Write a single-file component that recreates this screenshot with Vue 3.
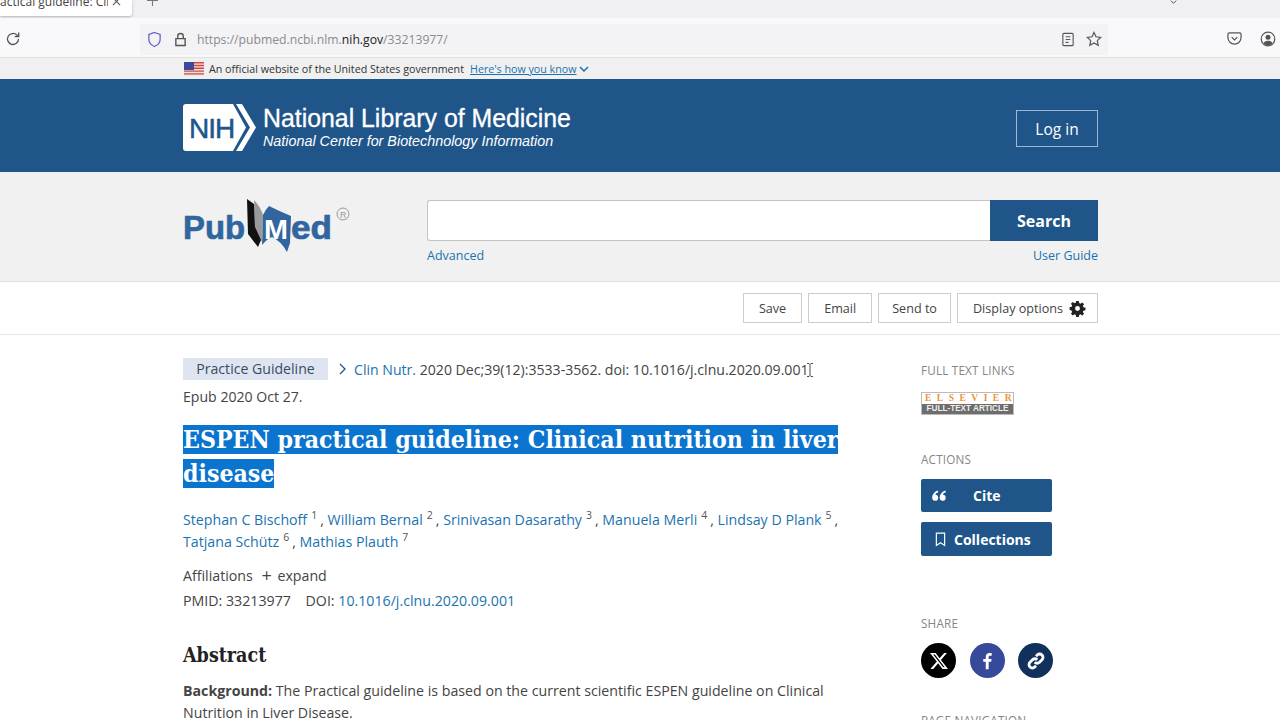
<script setup>
const authors = [
  { name: "Stephan C Bischoff", n: 1 },
  { name: "William Bernal", n: 2 },
  { name: "Srinivasan Dasarathy", n: 3 },
  { name: "Manuela Merli", n: 4 },
  { name: "Lindsay D Plank", n: 5 },
  { name: "Tatjana Schütz", n: 6 },
  { name: "Mathias Plauth", n: 7 },
];
</script>

<template>
  <div class="page">
    <div class="tabstrip">
      <div class="tab">
        <span class="tab-title">actical guideline: Clini</span>
        <svg class="tab-x" viewBox="0 0 10 10"><path d="M1 1l8 8M9 1l-8 8" /></svg>
      </div>
      <svg class="tab-plus" viewBox="0 0 12 12"><path d="M6 0v12M0 6h12" /></svg>
      <svg class="tab-down" viewBox="0 0 10 6"><path d="M1 1l4 4 4-4" /></svg>
    </div>

    <div class="toolbar">
      <svg class="reload" viewBox="0 0 16 16"><path d="M13.5 8a5.5 5.5 0 1 1-1.7-4L13.5 5.6M13.7 1.6v4h-4" /></svg>
      <div class="urlbar">
        <svg class="shield" viewBox="0 0 16 18"><path d="M8 1.5l6 2v5.5c0 3.6-2.6 6-6 7.5-3.4-1.500-6-3.900-6-7.500V3.500z" /></svg>
        <svg class="lock" viewBox="0 0 14 16"><path d="M4 7V4.500a3 3 0 0 1 6 0V7M2 7h10v7.500H2z" /></svg>
        <span class="url">https://pubmed.ncbi.nlm.<b>nih.gov</b>/33213977/</span>
        <svg class="reader" viewBox="0 0 14 16"><path d="M2.500 1.500h9a1 1 0 0 1 1 1v11a1 1 0 0 1-1 1h-9a1 1 0 0 1-1-1v-11a1 1 0 0 1 1-1zM4.500 5h5M4.500 8h5M4.500 11h3" /></svg>
        <svg class="star" viewBox="0 0 16 16"><path d="M8 1.500l2 4.300 4.700.6-3.400 3.200.9 4.700L8 12l-4.200 2.300.9-4.700L1.300 6.400 6 5.800z" /></svg>
      </div>
      <svg class="pocket" viewBox="0 0 16 16"><path d="M2.500 2h11A1.500 1.500 0 0 1 15 3.500V7A7 7 0 0 1 1 7V3.500A1.500 1.500 0 0 1 2.500 2zM5 6.500l3 3 3-3" /></svg>
      <svg class="account" viewBox="0 0 16 16">
        <circle class="ring" cx="8" cy="8" r="6.800" />
        <circle cx="8" cy="6.300" r="2.500" />
        <path d="M3.500 12.500c.6-2 2.400-2.800 4.500-2.800s3.900.8 4.500 2.800a6.500 6.500 0 0 1-9 0z" />
      </svg>
    </div>

    <div class="gov">
      <div class="wrap gov-in">
        <svg class="flag" viewBox="0 0 20 14">
          <rect width="20" height="14" fill="#e8e4e4" />
          <path d="M0 .7h20M0 3.500h20M0 6.300h20M0 9.100h20M0 11.900h20" stroke="#d2483f" stroke-width="1.400" />
          <rect width="10" height="8" fill="#3d4a9c" />
        </svg>
        <span>An official website of the United States government</span>
        <span class="know">Here's how you know</span>
        <svg class="know-ch" viewBox="0 0 10 6"><path d="M1 1l4 4 4-4" /></svg>
      </div>
    </div>

    <header class="nih">
      <div class="wrap nih-in">
        <div class="nih-brand">
          <svg class="nih-logo" viewBox="0 0 73 47">
            <path fill="#fff" d="M3 0h47l13 23.500L50 47H3a3 3 0 0 1-3-3V3a3 3 0 0 1 3-3z" />
            <path fill="#fff" d="M53 0h6l14 23.500L59 47h-6l14-23.500z" />
            <text x="6" y="34" class="nih-text">NIH</text>
          </svg>
          <div>
            <div class="nlm">National Library of Medicine</div>
            <div class="ncbi">National Center for Biotechnology Information</div>
          </div>
        </div>
        <a class="login">Log in</a>
      </div>
    </header>

    <section class="search">
      <div class="wrap search-in">
        <svg class="pm-logo" viewBox="0 0 170 58">
          <path fill="#31659f" d="M80 18Q83 12 86 9Q96 14 108 19L107 46L104 55Q98 44 89 40Q84 42 79 48z" />
          <path fill="#9a9a9a" d="M71 3Q77 9 80 18L80 37L79 45L72 32z" />
          <path fill="#111" d="M64 2L71 7L72 30L78 43L75 50L65 37z" />
          <text x="0" y="42" class="pm-text" textLength="62" lengthAdjust="spacingAndGlyphs">Pub</text>
          <text x="81" y="42" class="pm-m" textLength="24" lengthAdjust="spacingAndGlyphs">M</text>
          <text x="108" y="42" class="pm-text" textLength="41" lengthAdjust="spacingAndGlyphs">ed</text>
          <circle cx="160" cy="17" r="6" fill="none" stroke="#999" />
          <text x="157" y="20.500" class="pm-r">R</text>
        </svg>
        <div class="search-box">
          <div class="search-row">
            <div class="search-input"></div>
            <div class="search-btn">Search</div>
          </div>
          <div class="search-links">
            <a>Advanced</a>
            <a>User Guide</a>
          </div>
        </div>
      </div>
    </section>

    <div class="actions-bar">
      <div class="wrap actions-in">
        <button>Save</button>
        <button>Email</button>
        <button class="send">Send to</button>
        <button class="display">
          Display options
          <svg class="gear" viewBox="0 0 16 16">
            <path fill-rule="evenodd" d="M6.600 0h2.800l.4 2.200 1.300.6 1.900-1.300 2 2-1.300 1.900.6 1.300 2.200.4v2.800l-2.200.4-.6 1.300 1.300 1.900-2 2-1.900-1.300-1.300.6-.4 2.200H6.600l-.4-2.200-1.300-.6-1.900 1.300-2-2 1.300-1.900-.6-1.300L-.5 9.400V6.600l2.200-.4.6-1.300-1.300-1.900 2-2 1.900 1.300 1.300-.6zM8 5.400a2.600 2.600 0 1 0 0 5.200 2.600 2.600 0 0 0 0-5.200z" />
          </svg>
        </button>
      </div>
    </div>

    <div class="wrap content">
      <main class="article">
        <div class="cit">
          <span class="badge">Practice Guideline</span>
          <svg class="cit-ch" viewBox="0 0 7 12"><path d="M1 1l5 5-5 5" /></svg>
          <a>Clin Nutr.</a> 2020 Dec;39(12):3533-3562. doi: 10.1016/j.clnu.2020.09.001<svg class="ibeam" viewBox="0 0 6 14"><path d="M0 .5h2l1 1 1-1h2M3 1.500v11M0 13.500h2l1-1 1 1h2" /></svg>
          <br />Epub 2020 Oct 27.
        </div>
        <h1><span>ESPEN practical guideline: Clinical nutrition in liver disease</span></h1>
        <div class="authors">
          <template v-for="(a, i) in authors" :key="a.n">
            <a>{{ a.name }}</a><sup>{{ a.n }}</sup><template v-if="i < authors.length - 1">, </template>
          </template>
        </div>
        <div class="affil">Affiliations <span class="plus">+</span> expand</div>
        <div class="ids">PMID: 33213977 <span class="doi">DOI:</span> <a>10.1016/j.clnu.2020.09.001</a></div>
        <h2>Abstract</h2>
        <p class="abstract"><b>Background:</b> The Practical guideline is based on the current scientific ESPEN guideline on Clinical Nutrition in Liver Disease.</p>
      </main>

      <aside class="side">
        <div class="side-title">FULL TEXT LINKS</div>
        <div class="elsevier">
          <div class="el-top">ELSEVIER</div>
          <div class="el-bot">FULL-TEXT ARTICLE</div>
        </div>
        <div class="side-title actions-title">ACTIONS</div>
        <div class="side-btn cite">
          <svg class="quote" viewBox="0 0 14 11"><path d="M5.800.5C2.800 1.600.2 4.200.2 7.800a3 3 0 1 0 3.300-3c.1-1 1-1.900 2.900-2.500zM13.300.5c-3 1.100-5.600 3.700-5.600 7.300a3 3 0 1 0 3.300-3c.1-1 1-1.900 2.900-2.500z" /></svg>
          <span>Cite</span>
        </div>
        <div class="side-btn coll">
          <svg class="bookmark" viewBox="0 0 12 16"><path d="M1.500 1h9v13.500L6 11.500l-4.500 3z" /></svg>
          <span>Collections</span>
        </div>
        <div class="side-title share-title">SHARE</div>
        <div class="share">
          <span class="circle c-x">
            <svg viewBox="0 0 24 24"><path fill="#fff" fill-rule="evenodd" d="M18.200 2.500h3.300l-7.200 8.200L22.800 21.500h-6.600l-5.200-6.800-5.900 6.800H1.700l7.700-8.800L1.200 2.500H8l4.700 6.200zm-1.200 17h1.800L7 4.300H5z" /></svg>
          </span>
          <span class="circle c-f">
            <svg viewBox="0 0 24 24"><path fill="#fff" d="M14 22v-9h3l.5-3.500H14V7.300c0-1 .3-1.700 1.800-1.700h1.800V2.400c-.3 0-1.400-.1-2.600-.1-2.700 0-4.500 1.600-4.500 4.600v2.600H7.500V13h3v9z" /></svg>
          </span>
          <span class="circle c-l">
            <svg viewBox="0 0 24 24"><g fill="none" stroke="#fff" stroke-width="3.400"><path d="M10.500 13.500a4 4 0 0 0 5.700 0l3-3a4 4 0 0 0-5.700-5.700l-1.500 1.500" /><path d="M13.500 10.500a4 4 0 0 0-5.700 0l-3 3a4 4 0 0 0 5.700 5.700l1.500-1.500" /></g></svg>
          </span>
        </div>
        <div class="side-title nav-title">PAGE NAVIGATION</div>
      </aside>
    </div>
  </div>
</template>

<style scoped>
.page {
  height: 720px;
  overflow: hidden;
  background: #fff;
  font-family: "Open Sans", "Noto Sans", sans-serif;
  color: #212121;
  position: relative;
}
.wrap {
  width: 915px;
  margin: 0 0 0 183px;
}
a {
  color: #1a73b0;
}

.tabstrip {
  height: 18px;
  background: #f0f0f4;
  position: relative;
  display: flex;
}
.tab {
  width: 132px;
  height: 16px;
  background: #fff;
  box-shadow: 0 1px 3px rgba(0, 0, 0, 0.25);
  border-radius: 0 0 3px 0;
  position: relative;
  overflow: hidden;
}
.tab-title {
  position: absolute;
  left: 0;
  top: -6px;
  width: 108px;
  overflow: hidden;
  white-space: nowrap;
  font-size: 12px;
  line-height: 16px;
  color: #444;
}
.tab-x {
  position: absolute;
  left: 112px;
  top: -3px;
  width: 9px;
  height: 9px;
  fill: none;
  stroke: #555;
  stroke-width: 1.200;
}
.tab-plus {
  position: absolute;
  left: 147px;
  top: -5px;
  width: 11px;
  height: 11px;
  fill: none;
  stroke: #777;
  stroke-width: 1.200;
}
.tab-down {
  position: absolute;
  left: 1170px;
  top: 0;
  width: 7px;
  height: 4px;
  fill: none;
  stroke: #555;
  stroke-width: 1.500;
}

.toolbar {
  height: 39px;
  background: #f9f9fb;
  border-bottom: 1px solid #e2e2e4;
  display: flex;
  align-items: center;
  position: relative;
}
.reload {
  width: 16px;
  height: 16px;
  margin: 2px 0 0 5px;
  fill: none;
  stroke: #555;
  stroke-width: 1.300;
}
.urlbar {
  width: 968px;
  height: 31px;
  margin: 3px 0 0 119px;
  background: #f3f3f5;
  display: flex;
  align-items: center;
}
.shield {
  width: 15px;
  height: 17px;
  margin-left: 7px;
  fill: none;
  stroke: #5a5fc8;
  stroke-width: 1.300;
}
.lock {
  width: 13px;
  height: 15px;
  margin-left: 12px;
  fill: none;
  stroke: #555;
  stroke-width: 1.500;
}
.url {
  margin-left: 10px;
  font-size: 12.200px;
  color: #8a8a90;
  flex: 1;
}
.url b {
  font-weight: 400;
  color: #222;
}
.reader {
  width: 14px;
  height: 15px;
  fill: none;
  stroke: #555;
  stroke-width: 1.200;
}
.star {
  width: 16px;
  height: 16px;
  margin: 0 6px 0 11px;
  fill: none;
  stroke: #555;
  stroke-width: 1.200;
}
.pocket {
  width: 15px;
  height: 15px;
  margin: 2px 0 0 119px;
  fill: none;
  stroke: #555;
  stroke-width: 1.300;
}
.account {
  width: 16px;
  height: 16px;
  margin: 2px 0 0 18px;
  fill: #555;
}
.account .ring {
  fill: none;
  stroke: #555;
  stroke-width: 1.200;
}

.gov {
  height: 21px;
  background: #f0f0f0;
  font-size: 10.700px;
  color: #333;
}
.gov-in {
  display: flex;
  align-items: center;
  height: 21px;
}
.flag {
  width: 20px;
  height: 14px;
  margin: 0 5px 0 1px;
}
.know {
  margin-left: 6px;
  color: #1a73b0;
  text-decoration: underline;
}
.know-ch {
  width: 10px;
  height: 6px;
  margin-left: 2px;
  fill: none;
  stroke: #1a73b0;
  stroke-width: 1.500;
}

.nih {
  height: 93px;
  background: #20558a;
  color: #fff;
}
.nih-in {
  display: flex;
  align-items: center;
  justify-content: space-between;
  height: 100%;
  box-sizing: border-box;
  padding-top: 3px;
}
.nih-brand {
  display: flex;
  align-items: center;
  gap: 7px;
}
.nih-logo {
  width: 73px;
  height: 47px;
}
.nih-text {
  font-family: "Liberation Sans", sans-serif;
  font-size: 28px;
  fill: #20558a;
  stroke: #20558a;
  stroke-width: 0.500;
  letter-spacing: -1px;
}
.nlm {
  font-family: "Liberation Sans", sans-serif;
  font-size: 24.850px;
  line-height: 27px;
  -webkit-text-stroke: 0.300px #fff;
}
.ncbi {
  font-family: "Liberation Sans", sans-serif;
  font-style: italic;
  font-size: 14.350px;
  line-height: 18px;
}
.login {
  width: 80px;
  height: 35px;
  margin-top: 3px;
  border: 1px solid #9db8d2;
  color: #fff;
  font-size: 15.500px;
  display: flex;
  align-items: center;
  justify-content: center;
}

.search {
  height: 110px;
  background: #f1f1f1;
  border-bottom: 1px solid #e0e0e0;
  box-sizing: border-box;
}
.search-in {
  display: flex;
  position: relative;
}
.pm-logo {
  width: 170px;
  height: 58px;
  flex: none;
  margin: 25px 74px 0 0;
}
.pm-text {
  font-family: "Liberation Sans", sans-serif;
  font-weight: 700;
  font-size: 34px;
  fill: #31659f;
  stroke: #31659f;
  stroke-width: 0.700;
}
.pm-m {
  font-family: "Liberation Sans", sans-serif;
  font-weight: 700;
  font-size: 27px;
  fill: #fff;
}
.pm-r {
  font-family: "Liberation Sans", sans-serif;
  font-size: 9px;
  fill: #999;
}
.search-box {
  flex: 1;
  padding-top: 28px;
}
.search-row {
  display: flex;
  height: 41px;
}
.search-input {
  flex: 1;
  background: #fff;
  border: 1px solid #c4c4c4;
  border-right: 0;
  border-radius: 3px 0 0 3px;
}
.search-btn {
  width: 108px;
  padding-top: 1px;
  box-sizing: border-box;
  background: #20558a;
  color: #fff;
  font-weight: 700;
  font-size: 16px;
  display: flex;
  align-items: center;
  justify-content: center;
}
.search-links {
  display: flex;
  justify-content: space-between;
  margin-top: 5px;
  font-size: 12.500px;
  line-height: 19px;
}

.actions-bar {
  height: 53px;
  border-bottom: 1px solid #e6e6e6;
  box-sizing: border-box;
}
.actions-in {
  display: flex;
  justify-content: flex-end;
  gap: 6px;
  padding-top: 11px;
}
button {
  height: 30px;
  padding: 0 15px;
  background: #fff;
  border: 1px solid #ccc;
  font-family: inherit;
  font-size: 12.600px;
  color: #444;
  display: flex;
  align-items: center;
}
.send {
  padding: 0 13px;
}
.display {
  padding: 0 12px 0 15px;
}
.gear {
  width: 15px;
  height: 15px;
  margin-left: 7px;
  fill: #222;
  overflow: visible;
}

.content {
  display: flex;
  justify-content: space-between;
  padding-top: 21px;
}
.article {
  width: 657px;
  font-size: 14.200px;
  color: #444;
}
.cit {
  font-size: 14.100px;
  line-height: 27px;
  white-space: nowrap;
}
.badge {
  display: inline-block;
  width: 145px;
  height: 22px;
  line-height: 22px;
  background: #dfe5f0;
  color: #3a4a66;
  text-align: center;
  vertical-align: 1px;
}
.cit-ch {
  width: 7px;
  height: 12px;
  margin: 0 8px 0 11px;
  fill: none;
  stroke: #205493;
  stroke-width: 1.300;
}
.ibeam {
  width: 6px;
  height: 14px;
  margin-left: -2px;
  fill: none;
  stroke: #222;
  stroke-width: 0.800;
  vertical-align: -2px;
}
h1 {
  margin: 13px 0 0;
  font-family: "DejaVu Serif Condensed", "Liberation Serif", serif;
  font-stretch: condensed;
  font-size: 24.650px;
  font-weight: 700;
  line-height: 34px;
  color: #fff;
}
h1 span {
  background: #0a74cf;
}
.authors {
  margin-top: 18px;
  line-height: 22px;
}
sup {
  font-size: 10.500px;
  color: #555;
  margin: 0 3px 0 4px;
  line-height: 0;
}
.affil {
  margin-top: 11px;
  line-height: 23px;
}
.plus {
  margin: 0 2px 0 5px;
  font-size: 18px;
  line-height: 16px;
  vertical-align: -1px;
}
.ids {
  margin-top: 2px;
  line-height: 23px;
}
.doi {
  margin-left: 11px;
}
h2 {
  margin: 30px 0 0;
  font-family: "DejaVu Serif Condensed", "Liberation Serif", serif;
  font-stretch: condensed;
  font-size: 19.500px;
  font-weight: 700;
  line-height: 28px;
  color: #222;
}
.abstract {
  margin: 10px 0 0;
  line-height: 22px;
}

.side {
  width: 177px;
  font-size: 11.700px;
}
.side-title {
  color: #858585;
  line-height: 16px;
  margin-top: 6px;
  letter-spacing: 0.200px;
}
.elsevier {
  width: 93px;
  height: 23px;
  margin-top: 14px;
  border: 1px solid #bbb;
  box-sizing: border-box;
  font-family: "Liberation Serif", serif;
}
.el-top {
  height: 11px;
  line-height: 11px;
  font-size: 9.500px;
  letter-spacing: 5.500px;
  text-indent: 3px;
  color: #e8963a;
  font-weight: 700;
  white-space: nowrap;
}
.el-bot {
  height: 10px;
  background: #6d6d6d;
  color: #eee;
  font-family: "Liberation Sans", sans-serif;
  font-weight: 700;
  font-size: 8.200px;
  line-height: 10px;
  text-align: center;
  white-space: nowrap;
}
.actions-title {
  margin-top: 36px;
}
.side-btn {
  width: 131px;
  height: 33px;
  background: #20558a;
  border-radius: 2px;
  color: #fff;
  font-weight: 700;
  font-size: 14px;
  display: flex;
  align-items: center;
  margin-top: 12px;
}
.cite span {
  margin-left: 27px;
}
.quote {
  width: 14px;
  height: 11px;
  margin-left: 11px;
  fill: #fff;
}
.coll {
  margin-top: 10px;
  height: 34px;
}
.bookmark {
  width: 11px;
  height: 15px;
  margin: 0 8px 0 14px;
  fill: none;
  stroke: #fff;
  stroke-width: 1.300;
}
.share-title {
  margin-top: 59px;
}
.share {
  display: flex;
  gap: 13.500px;
  margin-top: 12px;
}
.circle {
  width: 35px;
  height: 35px;
  border-radius: 50%;
  display: flex;
  align-items: center;
  justify-content: center;
}
.circle svg {
  width: 20px;
  height: 20px;
}
.c-x {
  background: #000;
}
.c-f {
  background: #36499a;
}
.c-l {
  background: #12305c;
}
.nav-title {
  margin-top: 34px;
}
</style>
